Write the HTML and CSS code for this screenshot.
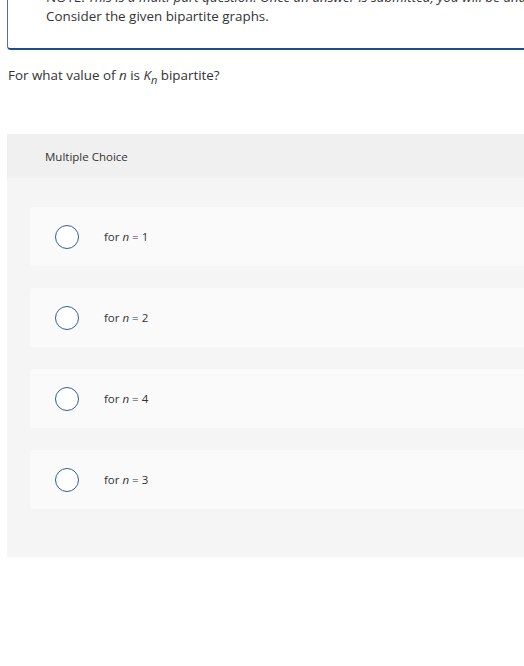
FILE: index.html
```html
<!DOCTYPE html>
<html>
<head>
<meta charset="utf-8">
<link rel="stylesheet" href="styles.css">
</head>
<body>
<div class="intro">
  <p class="note">NOTE: <i>This is a multi-part question. Once an answer is submitted, you will be unable to return to this part.</i></p>
  <p class="given">Consider the given bipartite graphs.</p>
</div>
<p class="question">For what value of <i>n</i> is <i>K</i><sub><i>n</i></sub> bipartite?</p>
<div class="panel">
  <div class="panel-head">Multiple Choice</div>
  <div class="panel-body">
    <div class="option"><span class="radio"></span><span class="label">for <i>n</i> = 1</span></div>
    <div class="option"><span class="radio"></span><span class="label">for <i>n</i> = 2</span></div>
    <div class="option"><span class="radio"></span><span class="label">for <i>n</i> = 4</span></div>
    <div class="option"><span class="radio"></span><span class="label">for <i>n</i> = 3</span></div>
  </div>
</div>
</body>
</html>
```
FILE: styles.css
```css
html, body {
  margin: 0;
  padding: 0;
  background: #ffffff;
  overflow: hidden;
}
body {
  font-family: "Open Sans", "Lato", sans-serif;
  color: #333333;
  width: 524px;
}
.intro {
  margin: -12px -40px 0 7px;
  padding: 0 0 22px 38px;
  border-left: 1px solid #5a6f8a;
  border-bottom: 2px solid #1d4d86;
  border-bottom-left-radius: 4px;
  font-size: 13.4px;
  line-height: 19px;
  white-space: nowrap;
}
.intro p {
  margin: 0;
}
.question {
  margin: 16px 0 0 8px;
  font-size: 13.4px;
  line-height: 18px;
}
.question sub {
  font-size: 11px;
  vertical-align: -4px;
  line-height: 0;
}
.panel {
  margin: 50px -20px 0 7px;
  background: #f5f5f5;
}
.panel-head {
  background: #f0f0f0;
  height: 44px;
  padding-left: 38px;
  display: flex;
  align-items: center;
  font-size: 11.5px;
  color: #333;
}
.panel-body {
  padding: 29px 0 48px 23px;
  display: flex;
  flex-direction: column;
  gap: 22px;
}
.option {
  height: 59px;
  background: #fafafa;
  border-radius: 3px;
  display: flex;
  align-items: center;
  padding-left: 25px;
}
.radio {
  width: 22px;
  height: 22px;
  border: 1.5px solid #2e5f92;
  border-radius: 50%;
  background: #ffffff;
  flex: none;
}
.label {
  margin-left: 25px;
  font-size: 11.5px;
  color: #333;
}
```
